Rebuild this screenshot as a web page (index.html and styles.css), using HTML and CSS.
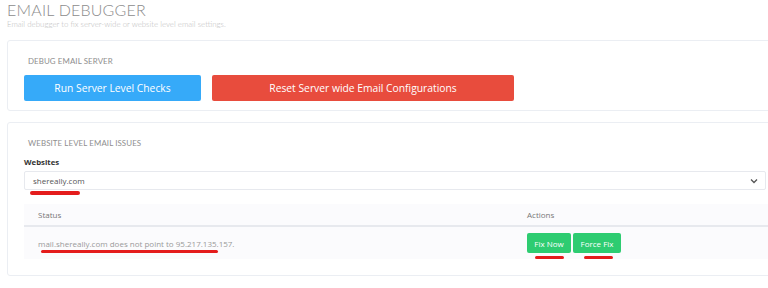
FILE: index.html
```html
<!DOCTYPE html>
<html>
<head>
<meta charset="utf-8">
<link rel="stylesheet" href="styles.css">
</head>
<body>
<div class="page">
  <div class="header">
    <h1 class="title">EMAIL DEBUGGER</h1>
    <p class="subtitle">Email debugger to fix server-wide or website level email settings.</p>
  </div>
  <div class="card card-server">
    <h2 class="card-title">DEBUG EMAIL SERVER</h2>
    <div class="btn-row">
      <button class="btn btn-blue">Run Server Level Checks</button>
      <button class="btn btn-red">Reset Server wide Email Configurations</button>
    </div>
  </div>
  <div class="card card-site">
    <h2 class="card-title">WEBSITE LEVEL EMAIL ISSUES</h2>
    <label class="label">Websites</label>
    <div class="select">
      <span class="select-value">shereally.com<span class="mark mark-site"></span></span>
      <svg class="chev" width="8" height="6" viewBox="0 0 8 6"><path d="M1 1.5 L4 4.5 L7 1.5" fill="none" stroke="#555" stroke-width="1.3"/></svg>
    </div>
    <div class="table">
      <div class="thead">
        <div class="col-status">Status</div>
        <div class="col-actions">Actions</div>
      </div>
      <div class="trow">
        <div class="col-status"><span class="msg">mail.shereally.com does not point to 95.217.135.157.<span class="mark mark-msg"></span></span></div>
        <div class="col-actions actions">
          <button class="btn-green btn-fix">Fix Now<span class="mark mark-btn1"></span></button>
          <button class="btn-green btn-force">Force Fix<span class="mark mark-btn2"></span></button>
        </div>
      </div>
    </div>
  </div>
</div>
</body>
</html>
```

FILE: styles.css
```css
html, body {
  margin: 0;
  padding: 0;
  background: #ffffff;
  overflow: hidden;
}
body {
  width: 768px;
  height: 288px;
  font-family: "Open Sans", "Noto Sans", sans-serif;
}
.page {
  box-sizing: border-box;
  padding: 0 0 0 7px;
  width: 768px;
  height: 288px;
  overflow: hidden;
}
.header {
  height: 40px;
}
.title {
  margin: 0;
  padding-top: 1px;
  font-family: "Lato", "Open Sans", sans-serif;
  font-weight: 300;
  font-size: 16px;
  line-height: 18px;
  color: #8c8c8c;
  letter-spacing: 0.2px;
}
.subtitle {
  margin: 0;
  font-family: "Lato", "Open Sans", sans-serif;
  font-weight: 300;
  font-size: 7.9px;
  line-height: 10px;
  color: #bdbdbd;
}
.card {
  border: 1px solid #ebeef3;
  border-radius: 3px;
  background: #fff;
  box-sizing: border-box;
  width: 780px;
}
.card-server {
  height: 71px;
  padding: 15px 16px 0 16px;
}
.card-site {
  margin-top: 11px;
  height: 154px;
  padding: 15px 16px 0 16px;
}
.card-title {
  margin: 0 0 0 4px;
  font-family: "Lato", "Open Sans", sans-serif;
  font-weight: 400;
  font-size: 7.9px;
  line-height: 10px;
  color: #8e8e8e;
  letter-spacing: 0.1px;
}
.btn-row {
  display: flex;
  gap: 11px;
  margin-top: 9px;
}
.btn {
  border: none;
  border-radius: 2px;
  height: 26px;
  color: #fff;
  font-family: "Open Sans", sans-serif;
  font-size: 10.3px;
  padding: 0;
}
.btn-blue {
  width: 177px;
  background: #36aaf9;
}
.btn-red {
  width: 302px;
  background: #e84c3d;
}
.label {
  display: block;
  margin-top: 9px;
  font-size: 7.8px;
  font-weight: 700;
  color: #333;
  line-height: 10px;
}
.select {
  margin-top: 4px;
  width: 742px;
  height: 19px;
  box-sizing: border-box;
  border: 1px solid #e7e9ee;
  border-radius: 2px;
  display: flex;
  align-items: center;
  justify-content: space-between;
  padding: 0 7px 0 8px;
}
.select-value {
  position: relative;
  font-size: 8px;
  color: #555;
}
.chev {
  display: block;
}
.mark {
  position: absolute;
  height: 4px;
  border-radius: 2px;
  background: #e41c1c;
}
.mark-site {
  left: -3px;
  top: 16px;
  width: 50px;
}
.table {
  margin-top: 14px;
  background: #fbfbfd;
  height: 55px;
  width: 760px;
}
.thead {
  display: flex;
  height: 21px;
  border-bottom: 2px solid #e7e9ee;
  align-items: center;
  font-size: 8px;
  color: #777;
}
.col-status {
  width: 489px;
  padding-left: 14px;
}
.trow {
  display: flex;
  align-items: flex-start;
  padding-top: 6px;
  font-size: 8px;
}
.trow .col-status {
  padding-top: 5px;
}
.msg {
  position: relative;
  color: #9a9a9a;
}
.mark-msg {
  left: 3px;
  top: 12px;
  width: 177px;
  height: 3px;
}
.actions {
  display: flex;
  gap: 2px;
}
.btn-green {
  position: relative;
  border: none;
  border-radius: 2px;
  background: #2ecc71;
  color: #fff;
  font-family: "Open Sans", sans-serif;
  font-size: 8px;
  height: 20px;
  padding: 0;
  white-space: nowrap;
}
.btn-fix {
  width: 44px;
}
.btn-force {
  width: 48px;
}
.mark-btn1 {
  left: 8px;
  top: 23px;
  width: 29px;
  height: 3px;
}
.mark-btn2 {
  left: 11px;
  top: 23px;
  width: 29px;
  height: 3px;
}
```
